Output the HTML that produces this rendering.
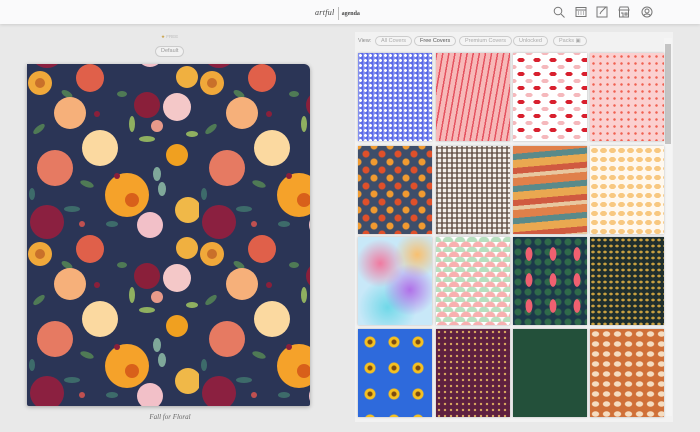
<!DOCTYPE html>
<html><head><meta charset="utf-8"><style>
*{margin:0;padding:0;box-sizing:border-box}
body{width:700px;height:432px;overflow:hidden;background:#e9e9e9;font-family:"Liberation Sans",sans-serif;position:relative}
.hdr{position:absolute;left:0;top:0;width:700px;height:24px;background:#fafafb;box-shadow:0 1px 3px rgba(0,0,0,.12)}
.logo{position:absolute;left:315px;top:7px;font-family:"Liberation Serif",serif;font-size:7px;color:#444}
.logo i{font-size:8px;letter-spacing:.3px}
.logo .bar{display:inline-block;width:1px;height:13px;background:#bbb;vertical-align:middle;margin:0 3px}
.logo b{font-weight:bold;font-size:6px}
.ic{position:absolute;top:6px}
.pill{position:absolute;border:1px solid #ccc;border-radius:7px;font-size:5.5px;color:#aaa;height:10px;line-height:8px;padding:0 5px;background:#f4f4f4}
.t{position:absolute;width:74px;height:88px;box-shadow:0 0 2px rgba(0,0,0,.25)}
.cap{position:absolute;left:130px;top:413px;width:80px;text-align:center;font-family:"Liberation Serif",serif;font-style:italic;font-size:7px;color:#666}
</style></head><body>
<div class="hdr">
 <div class="logo"><i>artful</i><span class="bar"></span><b>agenda</b></div>
 <svg class="ic" style="left:553px" width="12" height="12" viewBox="0 0 12 12" fill="none" stroke="#777" stroke-width="1"><circle cx="5" cy="5" r="3.8"/><path d="M8 8l3.5 3.5"/></svg>
 <svg class="ic" style="left:575px" width="12" height="12" viewBox="0 0 12 12" fill="none" stroke="#777" stroke-width="1"><rect x="1" y="1.5" width="10" height="9"/><path d="M1 4h10M3 6h1M5.5 6h1M8 6h1M3 8h1M5.5 8h1M8 8h1"/></svg>
 <svg class="ic" style="left:596px" width="12" height="12" viewBox="0 0 12 12" fill="none" stroke="#777" stroke-width="1"><rect x="1" y="1" width="10" height="10"/><path d="M4 8l1-2 5-5"/></svg>
 <svg class="ic" style="left:618px" width="12" height="12" viewBox="0 0 12 12" fill="none" stroke="#777" stroke-width="1"><path d="M1 4l1-3h8l1 3zM1.5 4v7h9V4M3 7h2v4M7 7h2v2H7z"/></svg>
 <svg class="ic" style="left:641px" width="12" height="12" viewBox="0 0 12 12" fill="none" stroke="#777" stroke-width="1"><circle cx="6" cy="6" r="5"/><circle cx="6" cy="5" r="2"/><path d="M2.8 9.5c1-2 5.4-2 6.4 0"/></svg>
</div>
<div style="position:absolute;left:161px;top:34px;font-size:4.5px;color:#c9a24a">★ <span style="color:#bbb">FREE</span></div>
<div class="pill" style="left:155px;top:46px;height:11px;line-height:9px;color:#999;background:#f1f1f1">Default</div>
<svg style="position:absolute;left:27px;top:64px;border-radius:0 6px 2px 2px;box-shadow:0 1px 4px rgba(0,0,0,.3)" width="283" height="342">
<defs><pattern id="f" width="172" height="171" patternUnits="userSpaceOnUse">
<rect width="172" height="171" fill="#2b3556"/>
<g fill="#4f7a55"><ellipse cx="40" cy="30" rx="6" ry="3" transform="rotate(30 40 30)"/><ellipse cx="95" cy="30" rx="5" ry="3"/><ellipse cx="12" cy="65" rx="7" ry="3" transform="rotate(-40 12 65)"/><ellipse cx="120" cy="75" rx="8" ry="3" fill="#8fb060"/><ellipse cx="130" cy="110" rx="4" ry="7" fill="#7fa89a"/><ellipse cx="135" cy="125" rx="4" ry="7" fill="#7fa89a"/><ellipse cx="60" cy="120" rx="7" ry="3" transform="rotate(20 60 120)"/><ellipse cx="45" cy="145" rx="8" ry="3" fill="#3d6b6a"/><ellipse cx="105" cy="60" rx="3" ry="8" fill="#8fb060"/><ellipse cx="165" cy="70" rx="6" ry="3" fill="#8fb060"/><ellipse cx="85" cy="160" rx="6" ry="3" fill="#3d6b6a"/><ellipse cx="5" cy="130" rx="3" ry="6" fill="#3d6b6a"/></g>
<circle cx="13" cy="19" r="12" fill="#f0a83a"/><circle cx="13" cy="19" r="5" fill="#c9702a"/>
<circle cx="63" cy="14" r="14" fill="#e0604a"/>
<circle cx="43" cy="49" r="16" fill="#f6b07a"/>
<circle cx="120" cy="41" r="13" fill="#8a1f3a"/>
<circle cx="150" cy="43" r="14" fill="#f4c8c8"/>
<circle cx="160" cy="13" r="11" fill="#f0b040"/>
<circle cx="73" cy="84" r="18" fill="#fbd9a0"/>
<circle cx="28" cy="104" r="18" fill="#e67a62"/>
<circle cx="150" cy="91" r="11" fill="#f0a020"/>
<circle cx="100" cy="131" r="22" fill="#f5a22a"/><circle cx="105" cy="136" r="7" fill="#d8601a"/>
<circle cx="20" cy="158" r="17" fill="#8b2040"/><circle cx="20" cy="-13" r="17" fill="#8b2040"/>
<circle cx="123" cy="161" r="13" fill="#f2c0c8"/><circle cx="123" cy="-10" r="13" fill="#f2c0c8"/>
<circle cx="161" cy="146" r="13" fill="#f0b848"/>
<circle cx="130" cy="62" r="6" fill="#e89a8a"/><circle cx="70" cy="50" r="3" fill="#8a1f3a"/><circle cx="90" cy="112" r="3" fill="#8a1f3a"/><circle cx="55" cy="160" r="3" fill="#c05050"/>
</pattern></defs>
<rect width="283" height="342" fill="url(#f)"/></svg>
<div class="cap">Fall for Floral</div>
<div style="position:absolute;left:355px;top:32px;width:318px;height:390px;background:#f2f2f2"></div>
<div style="position:absolute;left:358px;top:38px;font-size:5.5px;color:#888">View:</div>
<div class="pill" style="left:375px;top:36px">All Covers</div>
<div class="pill" style="left:414px;top:36px;color:#555">Free Covers</div>
<div class="pill" style="left:459px;top:36px">Premium Covers</div>
<div class="pill" style="left:513px;top:36px">Unlocked</div>
<div class="pill" style="left:553px;top:36px">Packs ▣</div>
<div style="position:absolute;left:664px;top:38px;width:8px;height:378px;background:#f5f5f5"></div>
<div style="position:absolute;left:665px;top:44px;width:6px;height:100px;background:#c4c4c4"></div>
<!-- row1 -->
<div class="t" style="left:358px;top:53px;background-color:#5a6ae8;background-image:radial-gradient(circle,#fff 1.3px,transparent 1.6px),linear-gradient(90deg,rgba(255,255,255,.25) 50%,transparent 50%);background-size:5px 5px,5px 5px"></div>
<div class="t" style="left:436px;top:53px;background:#f7b8b8;background-image:repeating-linear-gradient(100deg,rgba(224,58,74,.8) 0 1.5px,transparent 1.5px 6px),repeating-linear-gradient(0deg,transparent 0 7px,#f7b8b8 7px 11px);"></div>
<div class="t" style="left:513px;top:53px;background:#fff;background-image:radial-gradient(ellipse 5px 3px,#d8202e 70%,transparent 75%),radial-gradient(ellipse 5px 3px,#f5b8bc 70%,transparent 75%);background-size:16px 14px,16px 14px;background-position:0 0,8px 7px"></div>
<div class="t" style="left:590px;top:53px;background:#fbd0d0;background-image:radial-gradient(circle,#f06050 1px,transparent 1.5px);background-size:7px 7px"></div>
<!-- row2 -->
<div class="t" style="left:358px;top:146px;background:#3e4e6a;background-image:radial-gradient(circle,#e0502a 3px,transparent 4px),radial-gradient(circle,#f09a30 3px,transparent 4px);background-size:16px 16px,16px 16px;background-position:0 0,8px 8px"></div>
<div class="t" style="left:436px;top:146px;background:#f4f0ec;background-image:repeating-linear-gradient(90deg,rgba(90,70,60,.7) 0 2px,transparent 2px 5px),repeating-linear-gradient(0deg,rgba(90,70,60,.6) 0 2px,transparent 2px 5px)"></div>
<div class="t" style="left:513px;top:146px;background:repeating-linear-gradient(175deg,#e0804a 0 8px,#5a8a8a 8px 14px,#eaa850 14px 22px,#d05a40 22px 28px,#e8c8a0 28px 32px)"></div>
<div class="t" style="left:590px;top:146px;background:#fff8ee;background-image:radial-gradient(ellipse 4px 3px,#f8c880 80%,transparent 90%);background-size:9px 9px"></div>
<!-- row3 -->
<div class="t" style="left:358px;top:237px;background:radial-gradient(circle at 30% 30%,#f07aa0,transparent 30%),radial-gradient(circle at 70% 60%,#b070e8,transparent 35%),radial-gradient(circle at 40% 80%,#70d8e8,transparent 35%),radial-gradient(circle at 80% 20%,#f8c070,transparent 25%),#c8e8f8"></div>
<div class="t" style="left:436px;top:237px;background:#fff;background-image:radial-gradient(circle at 50% 100%,#f8b0b0 5px,transparent 6px),radial-gradient(circle at 50% 100%,#b8e0c0 5px,transparent 6px);background-size:12px 10px,12px 10px;background-position:0 0,6px 5px"></div>
<div class="t" style="left:513px;top:237px;background:#1c3a4a;background-image:radial-gradient(ellipse 4px 8px,#f06070 80%,transparent 90%),radial-gradient(circle,#2f6a4a 3px,transparent 4px);background-size:24px 26px,10px 10px;background-position:4px 4px,0 0"></div>
<div class="t" style="left:590px;top:237px;background:#1f2f2e;background-image:radial-gradient(ellipse 2px 1.5px,#c8a040 80%,transparent 100%);background-size:6px 6px"></div>
<!-- row4 -->
<div class="t" style="left:358px;top:329px;background:#2e6adc;background-image:radial-gradient(circle,#7a4a10 2px,#f5c020 3px,#f5c020 5px,transparent 6px);background-size:24px 26px"></div>
<div class="t" style="left:436px;top:329px;background:#5e2040;background-image:radial-gradient(circle,#d8a860 1px,transparent 1.4px);background-size:6px 6px"></div>
<div class="t" style="left:513px;top:329px;background:#23503a"></div>
<div class="t" style="left:590px;top:329px;background:#d07038;background-image:radial-gradient(ellipse 4px 3px,#f5dcc0 80%,transparent 100%);background-size:11px 10px"></div>
</body></html>
